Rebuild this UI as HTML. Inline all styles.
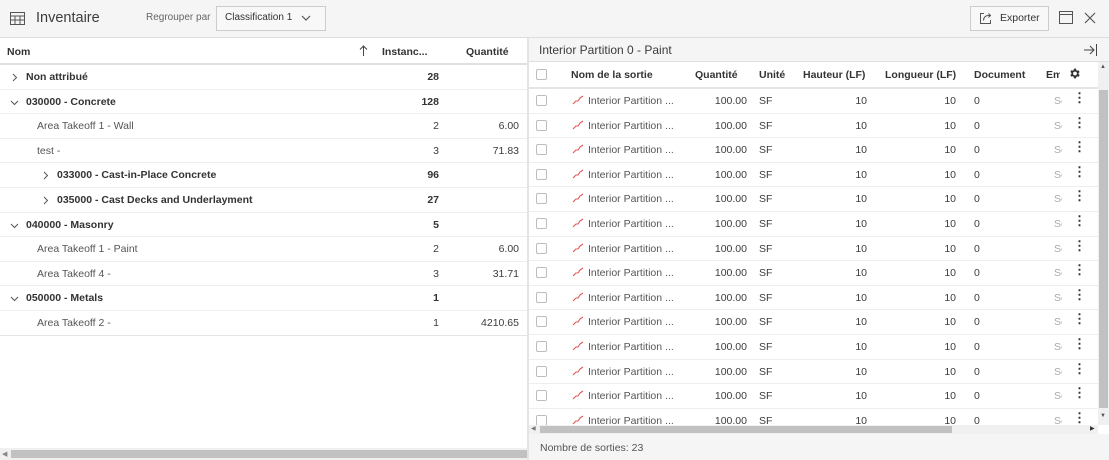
<!DOCTYPE html>
<html><head><meta charset="utf-8"><style>
*{box-sizing:border-box;margin:0;padding:0}
body{width:1109px;height:460px;overflow:hidden;background:#fff;font-family:"Liberation Sans",sans-serif;font-size:10.5px;color:#3c3c3c;position:relative}
.a{position:absolute;white-space:nowrap}
.b{font-weight:bold;color:#333}
.r{text-align:right}
.hl{position:absolute;height:1px;background:#e8e8e8}
.cb{position:absolute;width:11px;height:11px;border:1px solid #bdbdbd;border-radius:2px;background:#fff}
</style></head><body>
<div class="a" style="left:0;top:0;width:1109px;height:38px;background:#f5f5f5;border-bottom:1px solid #ddd"></div>
<svg class="a" style="left:10px;top:12px" width="15" height="13" viewBox="0 0 15 13"><rect x="0.5" y="0.5" width="14" height="12" fill="none" stroke="#555"/><line x1="0.5" y1="4" x2="14.5" y2="4" stroke="#555"/><line x1="0.5" y1="8" x2="14.5" y2="8" stroke="#555"/><line x1="5" y1="4" x2="5" y2="12.5" stroke="#555"/><line x1="10" y1="4" x2="10" y2="12.5" stroke="#555"/></svg>
<div class="a" style="left:36px;top:10px;font-size:14.5px;color:#3c3c3c">Inventaire</div>
<div class="a" style="left:146px;top:12px;font-size:10px;color:#666">Regrouper par</div>
<div class="a" style="left:216px;top:6px;width:110px;height:25px;border:1px solid #ccc;background:#f8f8f8"></div>
<div class="a" style="left:225px;top:12px;font-size:10px;color:#333">Classification 1</div>
<svg class="a" style="left:301px;top:15px" width="10" height="7"><path d="M1 1l4 4 4-4" fill="none" stroke="#555" stroke-width="1.2"/></svg>
<div class="a" style="left:970px;top:6px;width:79px;height:25px;border:1px solid #ccc;background:#f8f8f8"></div>
<svg class="a" style="left:979px;top:12px" width="13" height="13" viewBox="0 0 13 13"><path d="M5 1.5H1.5v10h10V8" fill="none" stroke="#555"/><path d="M4.5 8.5c0-3 2-5 5-5h2M9.5 1.5l2 2-2 2" fill="none" stroke="#555"/></svg>
<div class="a" style="left:1000px;top:12px;color:#333">Exporter</div>
<svg class="a" style="left:1059px;top:11px" width="15" height="14"><rect x="0.5" y="0.5" width="13" height="12" fill="none" stroke="#555"/><line x1="0" y1="3.5" x2="14" y2="3.5" stroke="#555"/></svg>
<svg class="a" style="left:1084px;top:12px" width="12" height="12"><path d="M1 1l10 10M11 1L1 11" stroke="#555" stroke-width="1.2"/></svg>

<div class="a b" style="left:7px;top:46px">Nom</div>
<svg class="a" style="left:359px;top:45px" width="9" height="12"><path d="M4.5 11V1M1 4.5l3.5-3.5 3.5 3.5" fill="none" stroke="#444"/></svg>
<div class="a b" style="left:382px;top:46px">Instanc...</div>
<div class="a b" style="left:466px;top:46px">Quantité</div>
<div class="hl" style="left:0;top:63px;width:528px;height:2px;background:#e0e0e0"></div>
<div style="position:absolute;left:0;top:65px;width:528px">
<div style="position:relative;height:24.6px;border-bottom:1px solid #eee"><svg class="a" style="left:12px;top:8px" width="6" height="9"><path d="M1 1l3.5 3.5L1 8" fill="none" stroke="#555"/></svg><span class="a b" style="left:26px;top:6px">Non attribué</span><span class="a b r" style="left:400px;width:39px;top:6px">28</span></div>
<div style="position:relative;height:24.6px;border-bottom:1px solid #eee"><svg class="a" style="left:10px;top:10px" width="9" height="6"><path d="M1 1l3.5 3.5L8 1" fill="none" stroke="#555"/></svg><span class="a b" style="left:26px;top:6px">030000 - Concrete</span><span class="a b r" style="left:400px;width:39px;top:6px">128</span></div>
<div style="position:relative;height:24.6px;border-bottom:1px solid #eee"><span class="a" style="left:37px;top:6px;color:#555">Area Takeoff 1 - Wall</span><span class="a r" style="left:400px;width:39px;top:6px">2</span><span class="a r" style="left:460px;width:59px;top:6px">6.00</span></div>
<div style="position:relative;height:24.6px;border-bottom:1px solid #eee"><span class="a" style="left:37px;top:6px;color:#555">test -</span><span class="a r" style="left:400px;width:39px;top:6px">3</span><span class="a r" style="left:460px;width:59px;top:6px">71.83</span></div>
<div style="position:relative;height:24.6px;border-bottom:1px solid #eee"><svg class="a" style="left:43px;top:8px" width="6" height="9"><path d="M1 1l3.5 3.5L1 8" fill="none" stroke="#555"/></svg><span class="a b" style="left:57px;top:6px">033000 - Cast-in-Place Concrete</span><span class="a b r" style="left:400px;width:39px;top:6px">96</span></div>
<div style="position:relative;height:24.6px;border-bottom:1px solid #eee"><svg class="a" style="left:43px;top:8px" width="6" height="9"><path d="M1 1l3.5 3.5L1 8" fill="none" stroke="#555"/></svg><span class="a b" style="left:57px;top:6px">035000 - Cast Decks and Underlayment</span><span class="a b r" style="left:400px;width:39px;top:6px">27</span></div>
<div style="position:relative;height:24.6px;border-bottom:1px solid #eee"><svg class="a" style="left:10px;top:10px" width="9" height="6"><path d="M1 1l3.5 3.5L8 1" fill="none" stroke="#555"/></svg><span class="a b" style="left:26px;top:6px">040000 - Masonry</span><span class="a b r" style="left:400px;width:39px;top:6px">5</span></div>
<div style="position:relative;height:24.6px;border-bottom:1px solid #eee"><span class="a" style="left:37px;top:6px;color:#555">Area Takeoff 1 - Paint</span><span class="a r" style="left:400px;width:39px;top:6px">2</span><span class="a r" style="left:460px;width:59px;top:6px">6.00</span></div>
<div style="position:relative;height:24.6px;border-bottom:1px solid #eee"><span class="a" style="left:37px;top:6px;color:#555">Area Takeoff 4 -</span><span class="a r" style="left:400px;width:39px;top:6px">3</span><span class="a r" style="left:460px;width:59px;top:6px">31.71</span></div>
<div style="position:relative;height:24.6px;border-bottom:1px solid #eee"><svg class="a" style="left:10px;top:10px" width="9" height="6"><path d="M1 1l3.5 3.5L8 1" fill="none" stroke="#555"/></svg><span class="a b" style="left:26px;top:6px">050000 - Metals</span><span class="a b r" style="left:400px;width:39px;top:6px">1</span></div>
<div style="position:relative;height:24.6px;border-bottom:1px solid #e4e4e4"><span class="a" style="left:37px;top:6px;color:#555">Area Takeoff 2 -</span><span class="a r" style="left:400px;width:39px;top:6px">1</span><span class="a r" style="left:460px;width:59px;top:6px">4210.65</span></div>
</div>
<div class="a" style="left:0;top:448px;width:528px;height:12px;background:#f0f0f0"></div>
<div class="a" style="left:11px;top:450px;width:517px;height:8px;background:#c1c1c1"></div>
<div class="a" style="left:2px;top:450px;font-size:7px;color:#888">&#9664;</div>
<div class="a" style="left:527px;top:38px;width:2px;height:422px;background:#e4e4e4"></div>

<div class="a" style="left:529px;top:38px;width:580px;height:24px;background:#f5f5f5;border-bottom:1px solid #e0e0e0"></div>
<div class="a" style="left:539px;top:43px;font-size:12px;color:#3c3c3c">Interior Partition 0 - Paint</div>
<svg class="a" style="left:1084px;top:44px" width="14" height="12"><path d="M0 6h10M6 2l4 4-4 4M12.5 0v12" fill="none" stroke="#444"/></svg>
<div class="cb" style="left:536px;top:69px"></div>
<div class="a b" style="left:571px;top:69px">Nom de la sortie</div>
<div class="a b" style="left:695px;top:69px">Quantité</div>
<div class="a b" style="left:759px;top:69px">Unité</div>
<div class="a b" style="left:803px;top:69px">Hauteur (LF)</div>
<div class="a b" style="left:885px;top:69px">Longueur (LF)</div>
<div class="a b" style="left:974px;top:69px">Document</div>
<div class="a b" style="left:1046px;top:69px;width:14px;overflow:hidden">Emp</div>
<svg class="a" style="left:1068px;top:67px" width="13" height="13" viewBox="0 0 24 24"><path fill="#333" d="M19.4 13a7.5 7.5 0 000-2l2.1-1.6-2-3.5-2.5 1a7.5 7.5 0 00-1.7-1L14.9 3h-4l-.4 2.7a7.5 7.5 0 00-1.700 1l-2.5-1-2 3.5L6.4 11a7.5 7.5 0 000 2l-2.1 1.6 2 3.5 2.5-1a7.5 7.5 0 001.7 1l.4 2.9h4l.4-2.7a7.5 7.5 0 001.7-1l2.5 1 2-3.5zM12.9 15.5a3.5 3.5 0 110-7 3.5 3.5 0 010 7z"/></svg>
<div class="hl" style="left:529px;top:87px;width:569px;height:2px;background:#e4e4e4"></div>
<div id="rows" style="position:absolute;left:529px;top:89px;width:569px;height:336px;overflow:hidden"></div>
<div class="a" style="left:1098px;top:62px;width:11px;height:363px;background:#f0f0f0"></div>
<div class="a" style="left:1099px;top:90px;width:9px;height:318px;background:#c1c1c1"></div>
<div class="a" style="left:1100px;top:64px;font-size:6px;color:#555">&#9650;</div>
<div class="a" style="left:1100px;top:413px;font-size:6px;color:#555">&#9660;</div>
<div class="a" style="left:529px;top:425px;width:569px;height:9px;background:#f0f0f0"></div>
<div class="a" style="left:540px;top:426px;width:412px;height:7px;background:#c1c1c1"></div>
<div class="a" style="left:531px;top:425px;font-size:6px;color:#777">&#9664;</div>
<div class="a" style="left:1090px;top:425px;font-size:6px;color:#333">&#9654;</div>
<div class="a" style="left:529px;top:434px;width:580px;height:26px;background:#f5f5f5"></div>
<div class="a" style="left:540px;top:442px;color:#555">Nombre de sorties: 23</div>
<script>
var h='';
for(var i=0;i<14;i++){var t=i*24.6;
h+='<div style="position:absolute;left:0;top:'+t+'px;width:569px;height:24.6px;border-bottom:1px solid #eee">'+
'<div class="cb" style="left:7px;top:6px"></div>'+
'<svg class="a" style="left:43px;top:6px" width="12" height="10"><path d="M1 9l3-3 2 0 2-3 3-2" fill="none" stroke="#e05555" stroke-width="1.1"/></svg>'+
'<span class="a" style="left:59px;top:6px;color:#555">Interior Partition ...</span>'+
'<span class="a r" style="left:160px;width:58px;top:6px">100.00</span>'+
'<span class="a" style="left:230px;top:6px">SF</span>'+
'<span class="a r" style="left:300px;width:38px;top:6px">10</span>'+
'<span class="a r" style="left:390px;width:37px;top:6px">10</span>'+
'<span class="a" style="left:445px;top:6px">0</span>'+
'<span class="a" style="left:525px;top:6px;color:#aaa;width:8px;overflow:hidden">Se</span>'+
'<span class="a b" style="left:544px;top:2px;font-size:13px;line-height:13px">&#8942;</span></div>';}
document.getElementById('rows').innerHTML=h;
</script>
</body></html>
